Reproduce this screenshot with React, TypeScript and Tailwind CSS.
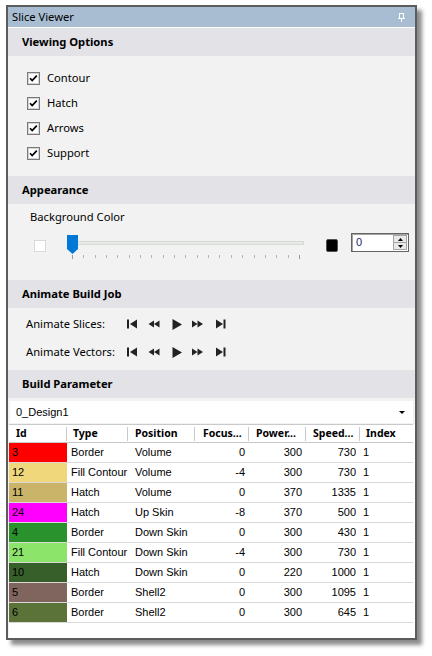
import React from 'react';

type Row = {
  id: string;
  color: string;
  type: string;
  position: string;
  focus: string;
  power: string;
  speed: string;
  index: string;
};

const rows: Row[] = [
  { id: '3', color: 'bg-[#ff0000]', type: 'Border', position: 'Volume', focus: '0', power: '300', speed: '730', index: '1' },
  { id: '12', color: 'bg-[#f0d77c]', type: 'Fill Contour', position: 'Volume', focus: '-4', power: '300', speed: '730', index: '1' },
  { id: '11', color: 'bg-[#c9b46a]', type: 'Hatch', position: 'Volume', focus: '0', power: '370', speed: '1335', index: '1' },
  { id: '24', color: 'bg-[#ff00ff]', type: 'Hatch', position: 'Up Skin', focus: '-8', power: '370', speed: '500', index: '1' },
  { id: '4', color: 'bg-[#29922d]', type: 'Border', position: 'Down Skin', focus: '0', power: '300', speed: '430', index: '1' },
  { id: '21', color: 'bg-[#8ce46a]', type: 'Fill Contour', position: 'Down Skin', focus: '-4', power: '300', speed: '730', index: '1' },
  { id: '10', color: 'bg-[#375f29]', type: 'Hatch', position: 'Down Skin', focus: '0', power: '220', speed: '1000', index: '1' },
  { id: '5', color: 'bg-[#80655f]', type: 'Border', position: 'Shell2', focus: '0', power: '300', speed: '1095', index: '1' },
  { id: '6', color: 'bg-[#5b7339]', type: 'Border', position: 'Shell2', focus: '0', power: '300', speed: '645', index: '1' },
];

const cols = 'grid grid-cols-[58px_61px_67px_54px_57px_54px_53px]';
const headCell = 'border-r border-[#c9c9c9] h-[14px] flex items-center whitespace-nowrap';

function SectionHeader({ title }: { title: string }) {
  return (
    <div className="h-[28px] shrink-0 flex items-center pl-[14px] bg-[#e2e2e7] font-bold text-[11.2px] text-black">
      {title}
    </div>
  );
}

function Checkbox({ label }: { label: string }) {
  return (
    <div className="h-[25px] flex items-center pl-[19px]">
      <svg width="13" height="13" viewBox="0 0 13 13" className="shrink-0">
        <rect x="0.5" y="0.5" width="12" height="12" fill="#fff" stroke="#7a7a7a" />
        <rect x="1.5" y="1.5" width="10" height="10" fill="none" stroke="#d4d4d4" />
        <path d="M3 6.2 L5.2 8.6 L9.8 3.6" fill="none" stroke="#000" strokeWidth="1.7" />
      </svg>
      <span className="ml-[7px]">{label}</span>
    </div>
  );
}

function MediaControls() {
  return (
    <div className="flex items-center">
      {/* first */}
      <svg width="10" height="10" viewBox="0 0 10 10">
        <rect x="0" y="0.5" width="2" height="9" fill="#222" />
        <path d="M10 0.5 L3 5 L10 9.5 Z" fill="#222" />
      </svg>
      {/* rewind */}
      <svg width="12" height="8" viewBox="0 0 12 8" className="ml-[11px]">
        <path d="M6 0.5 L0.5 4 L6 7.5 Z M11.5 0.5 L6 4 L11.5 7.5 Z" fill="#222" />
      </svg>
      {/* play */}
      <svg width="10" height="11" viewBox="0 0 10 11" className="ml-[12px]">
        <path d="M0.5 0 L10 5.5 L0.5 11 Z" fill="#222" />
      </svg>
      {/* fast forward */}
      <svg width="11" height="8" viewBox="0 0 11 8" className="ml-[10px]">
        <path d="M0 0.5 L5.5 4 L0 7.5 Z M5.5 0.5 L11 4 L5.5 7.5 Z" fill="#222" />
      </svg>
      {/* last */}
      <svg width="10" height="10" viewBox="0 0 10 10" className="ml-[13px]">
        <path d="M0 0.5 L7 5 L0 9.5 Z" fill="#222" />
        <rect x="7.5" y="0.5" width="2" height="9" fill="#222" />
      </svg>
    </div>
  );
}

function Slider() {
  const ticks = Array.from({ length: 21 });
  return (
    <div className="relative w-[238px] h-[26px]">
      <div className="absolute left-[5px] top-[8px] w-[232px] h-[4px] bg-[#e7eae7] border border-[#d6d9d6]" />
      <div className="absolute left-[5px] top-[22px] w-[228px] h-[4px] flex justify-between">
        {ticks.map((_, i) => (
          <div key={i} className={`w-px ${i === 0 || i === 20 ? 'h-[4px] bg-[#9a9a9a]' : 'h-[3px] bg-[#b5b5b5]'}`} />
        ))}
      </div>
      <svg width="11" height="19" viewBox="0 0 11 19" className="absolute left-0 top-[2px]">
        <path d="M0 0 H11 V14 L5.5 19 L0 14 Z" fill="#0078d7" />
      </svg>
    </div>
  );
}

function SpinBox() {
  return (
    <div className="w-[58px] h-[19px] bg-white border border-[#646464] shadow-[inset_1px_1px_0_#a3a3a3] flex items-stretch">
      <div className="flex-1 pl-[4px] flex items-center font-['Liberation_Sans',sans-serif] text-[11px] text-[#1b1b6e]">0</div>
      <div className="w-[16px] flex flex-col p-px">
        <div className="flex-1 bg-[#e9e9e9] border border-[#a5a5a5] flex items-center justify-center">
          <svg width="5" height="3" viewBox="0 0 5 3">
            <path d="M0 3 L2.5 0 L5 3 Z" fill="#000" />
          </svg>
        </div>
        <div className="flex-1 bg-[#e9e9e9] border border-[#a5a5a5] border-t-0 flex items-center justify-center">
          <svg width="5" height="3" viewBox="0 0 5 3">
            <path d="M0 0 L2.5 3 L5 0 Z" fill="#000" />
          </svg>
        </div>
      </div>
    </div>
  );
}

export default function App() {
  return (
    <div className="w-[432px] h-[656px] bg-white pt-[5px] pl-[6px] font-['Segoe_UI','Noto_Sans',sans-serif] text-[11.2px] text-black">
      <div className="w-[411px] h-[635px] border-2 border-[#5c5c5c] bg-[#f2f2f2] shadow-[5px_5px_4px_rgba(0,0,0,0.45)] flex flex-col overflow-hidden">
        {/* title bar */}
        <div className="h-[21px] shrink-0 bg-[#a8bcd2] border-b border-white flex items-center justify-between pl-[4px] pr-[10px]">
          <span>Slice Viewer</span>
          <svg width="7" height="9" viewBox="0 0 7 9">
            <rect x="1.5" y="0.5" width="4" height="5" fill="none" stroke="#fff" />
            <rect x="0" y="5" width="7" height="1" fill="#fff" />
            <rect x="3" y="6" width="1" height="3" fill="#fff" />
          </svg>
        </div>

        <SectionHeader title="Viewing Options" />
        <div className="pt-[10px] pb-[10px] shrink-0">
          {['Contour', 'Hatch', 'Arrows', 'Support'].map((l) => (
            <Checkbox key={l} label={l} />
          ))}
        </div>

        <SectionHeader title="Appearance" />
        <div className="h-[76px] shrink-0">
          <div className="h-[18px] mt-[4px] pl-[22px] flex items-center">Background Color</div>
          <div className="mt-[7px] flex items-start">
            <div className="ml-[26px] mt-[7px] w-[12px] h-[12px] bg-white border border-[#d9d9d9]" />
            <div className="ml-[21px]">
              <Slider />
            </div>
            <div className="ml-[21px] mt-[6px] w-[12px] h-[13px] bg-black rounded-[2px] border border-[#505050]" />
            <div className="ml-[13px]">
              <SpinBox />
            </div>
          </div>
        </div>

        <SectionHeader title="Animate Build Job" />
        <div className="h-[62px] pt-[2px] shrink-0">
          {['Animate Slices:', 'Animate Vectors:'].map((l) => (
            <div key={l} className="h-[28px] flex items-center pl-[18px]">
              <span className="w-[101px] whitespace-nowrap">{l}</span>
              <MediaControls />
            </div>
          ))}
        </div>

        <SectionHeader title="Build Parameter" />
        <div className="h-[3px] shrink-0" />
        <div className="mx-[2px] h-[22px] shrink-0 bg-white flex items-center justify-between pl-[6px] pr-[8px] font-['Liberation_Sans',sans-serif] text-[11px]">
          <span>0_Design1</span>
          <svg width="6" height="3" viewBox="0 0 6 3">
            <path d="M0 0 L3 3 L6 0 Z" fill="#000" />
          </svg>
        </div>

        {/* table */}
        <div className="flex-1 ml-[1px] mt-[1px] bg-white">
          <div className={`${cols} w-[404px] h-[19px] border-t border-b border-[#c9c9c9] font-bold text-[10.5px] items-center`}>
            <div className={`pl-[7px] ${headCell}`}>Id</div>
            <div className={`pl-[6px] ${headCell}`}>Type</div>
            <div className={`pl-[7px] ${headCell}`}>Position</div>
            <div className={`pl-[8px] ${headCell}`}>Focus...</div>
            <div className={`pl-[7px] ${headCell}`}>Power...</div>
            <div className={`pl-[7px] ${headCell}`}>Speed...</div>
            <div className="pl-[6px] h-[14px] flex items-center">Index</div>
          </div>
          {rows.map((r) => (
            <div
              key={r.id}
              className={`${cols} w-[404px] h-[20px] border-b border-[#d9d9d9] font-['Liberation_Sans',sans-serif] text-[11px] whitespace-nowrap`}
            >
              <div className={`${r.color} pl-[3px] flex items-center`}>{r.id}</div>
              <div className="pl-[4px] flex items-center">{r.type}</div>
              <div className="pl-[7px] flex items-center">{r.position}</div>
              <div className="pr-[4px] flex items-center justify-end">{r.focus}</div>
              <div className="pr-[4px] flex items-center justify-end">{r.power}</div>
              <div className="pr-[4px] flex items-center justify-end">{r.speed}</div>
              <div className="pl-[3px] flex items-center">{r.index}</div>
            </div>
          ))}
        </div>
      </div>
    </div>
  );
}
